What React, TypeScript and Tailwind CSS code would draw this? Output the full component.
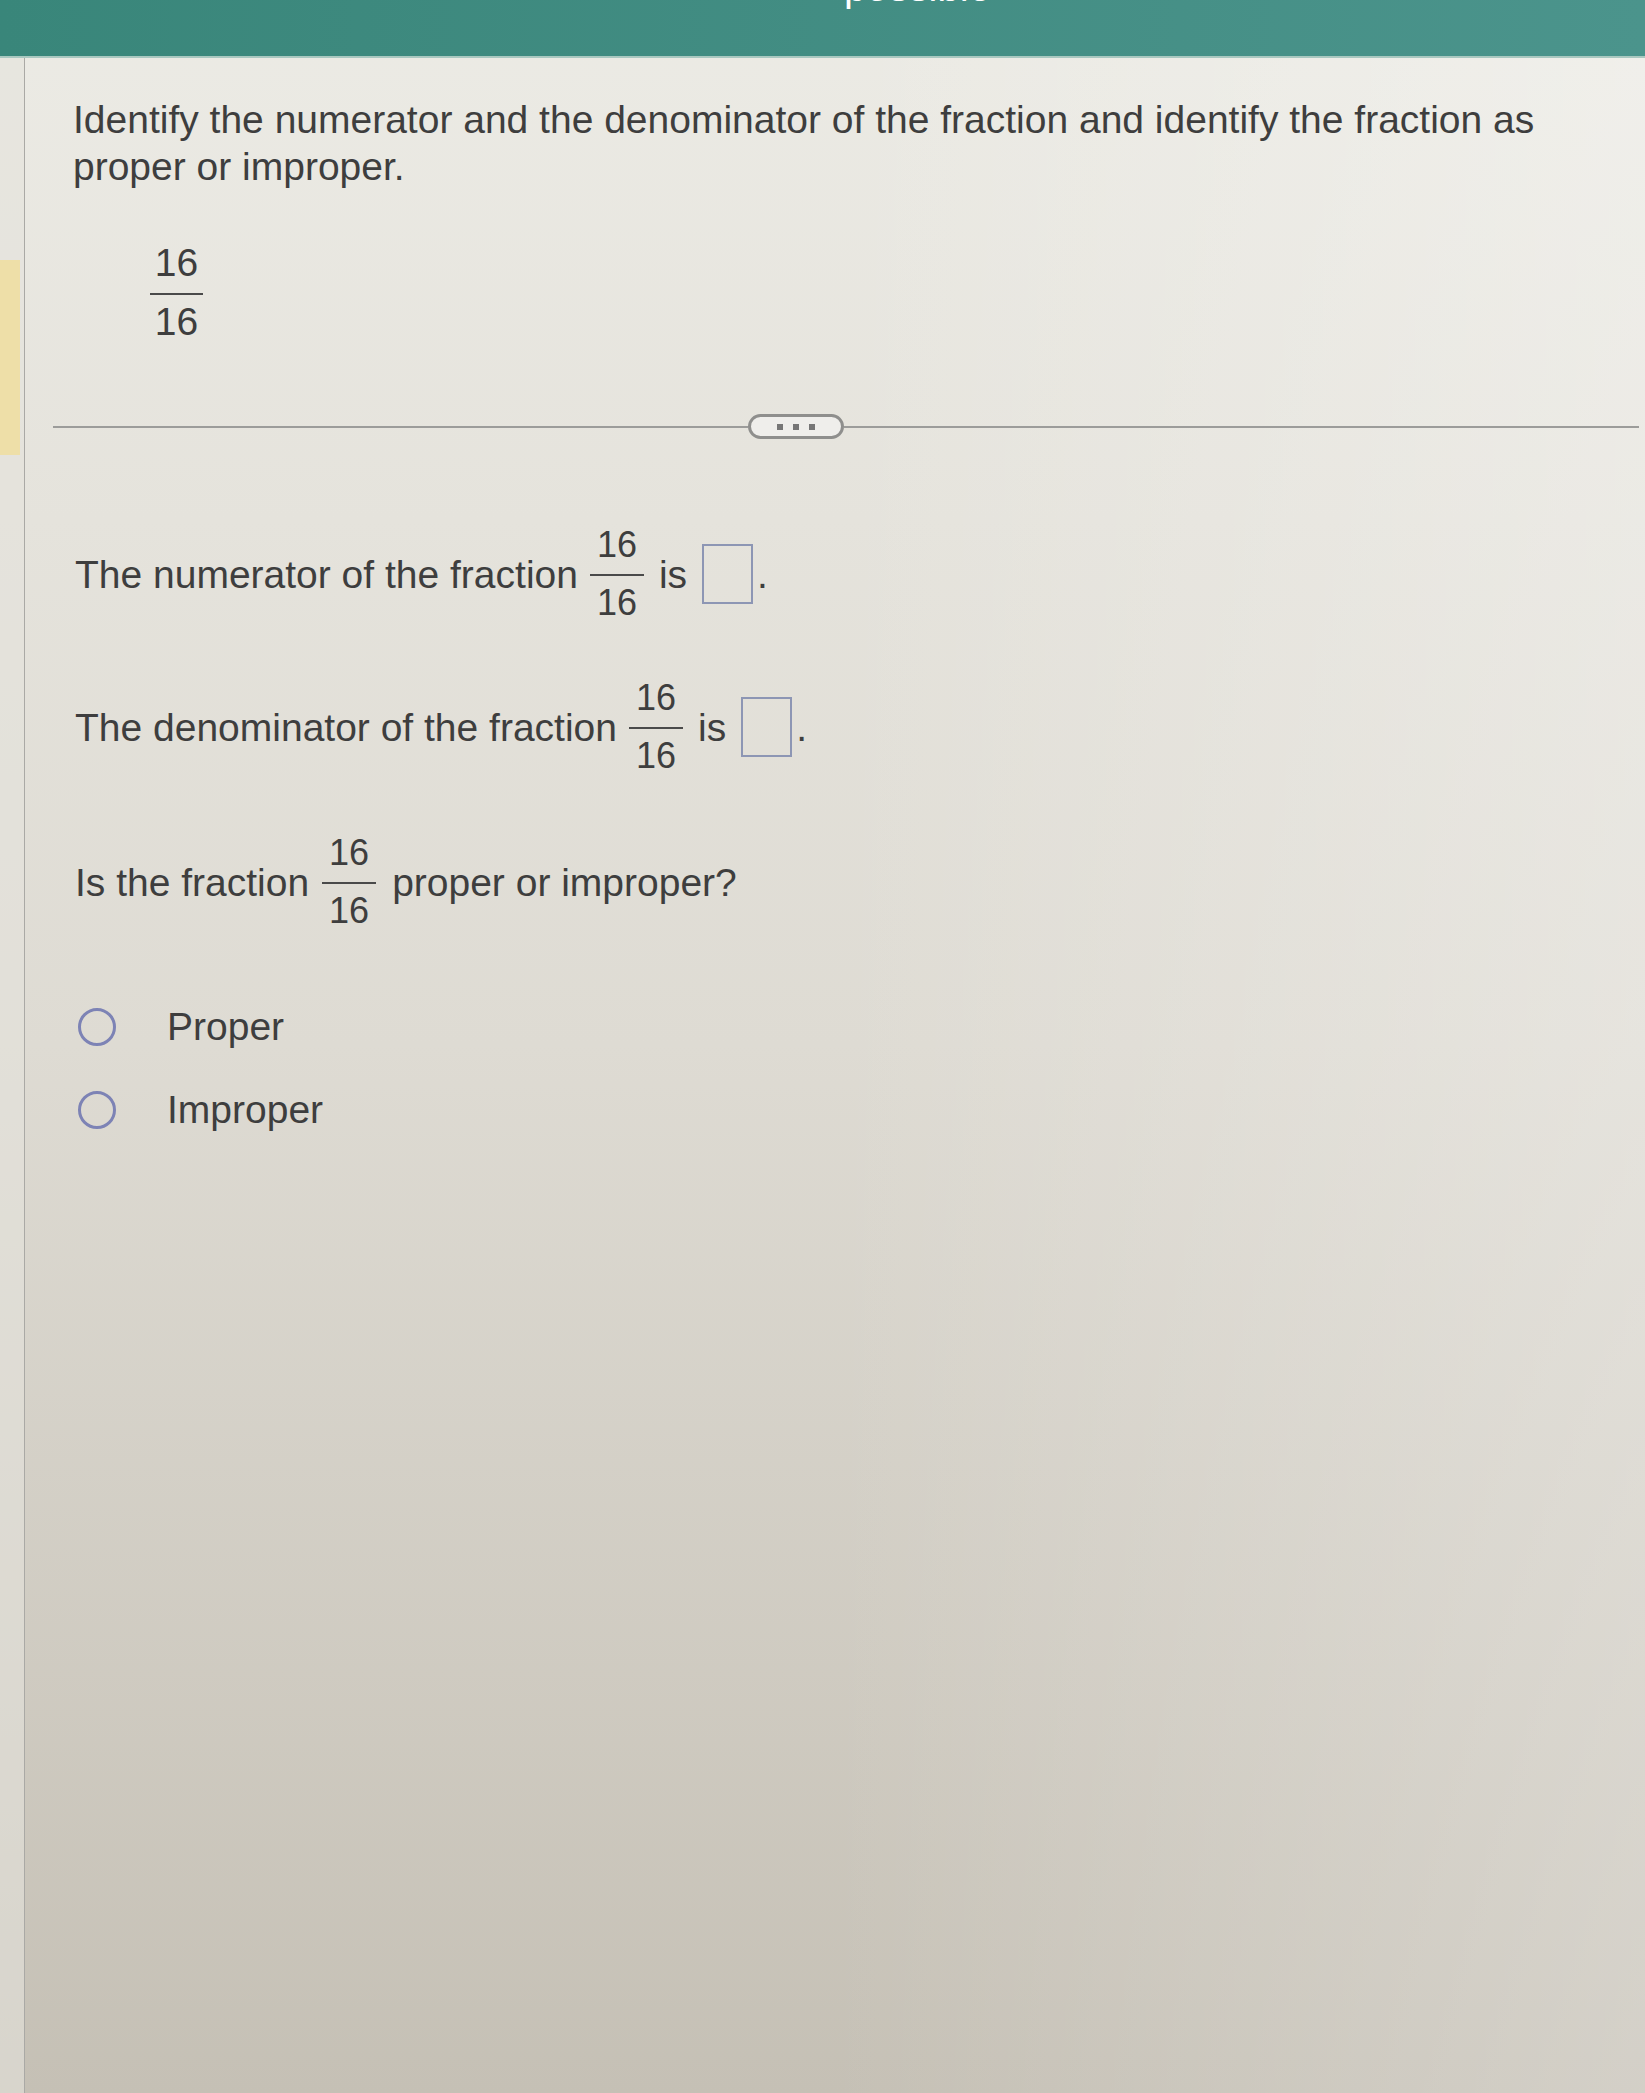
import React from 'react';

function Fraction({ big = false }: { big?: boolean }) {
  const num = big ? 'text-[39px]' : 'text-[36px]';
  return (
    <div className={`flex flex-col items-center ${big ? 'w-[53px]' : 'w-[54px]'}`}>
      <span className={`${num} leading-none`}>16</span>
      <span className={`${big ? 'mt-[11px]' : 'mt-[11px]'} h-[2px] w-full bg-[#4a4a4a]`} />
      <span className={`${big ? 'mt-[7px]' : 'mt-[9px]'} ${num} leading-none`}>16</span>
    </div>
  );
}

function AnswerRow({ label, className }: { label: string; className?: string }) {
  return (
    <div className={`ml-[22px] flex items-center text-[39px] leading-[47px] ${className ?? ''}`}>
      <span>{label}</span>
      <div className="ml-[12px]">
        <Fraction />
      </div>
      <span className="ml-[15px]">is</span>
      <span className="ml-[15px] h-[60px] w-[51px] border-2 border-[#8d96b4]" />
      <span className="ml-[4px]">.</span>
    </div>
  );
}

function Radio({ label, className }: { label: string; className?: string }) {
  return (
    <label className={`ml-[25px] flex h-[47px] items-center ${className ?? ''}`}>
      <span className="h-[38px] w-[38px] rounded-full border-[3px] border-[#7d83b5]" />
      <span className="ml-[51px] text-[39px] leading-[47px]">{label}</span>
    </label>
  );
}

export default function App() {
  return (
    <div className="min-h-[2093px] w-full bg-gradient-to-b from-[#ecebe5] via-[#dedbd3] to-[#c5c0b5] font-['Liberation_Sans',Arial,sans-serif] text-[#3e3e3e]">
      <div className="flex min-h-[2093px] w-full flex-col bg-gradient-to-r from-transparent via-transparent to-white/25">
        {/* Top bar */}
        <header className="flex h-[58px] justify-center overflow-hidden border-b-2 border-[#a9c8c0] bg-gradient-to-r from-[#39867a] to-[#4b948c]">
          <span className="ml-[190px] -mt-[33px] text-[40px] leading-none text-white">possible</span>
        </header>

        <div className="flex flex-1">
          {/* Left gutter */}
          <aside className="w-[25px] border-r border-[#aaa9a5] bg-[#e4e2dc]/60">
            <div className="mt-[202px] h-[195px] w-[20px] bg-[#eedfa8]" />
          </aside>

          <main className="flex-1 pl-[28px] pr-[6px] pt-[38px]">
            <p className="ml-[20px] w-[1530px] text-[39px] leading-[47px]">
              Identify the numerator and the denominator of the fraction and identify the fraction as proper or improper.
            </p>

            <div className="ml-[97px] mt-[53px] w-fit">
              <Fraction big />
            </div>

            {/* Divider */}
            <div className="mt-[73px] flex items-center">
              <span className="h-[2px] w-[695px] bg-[#9c9c9a]" />
              <button className="flex h-[25px] w-[96px] items-center justify-center gap-[10px] rounded-full border-[3px] border-[#8f8f8d] bg-[#efeeeb]">
                <span className="h-[6px] w-[6px] bg-[#767676]" />
                <span className="h-[6px] w-[6px] bg-[#767676]" />
                <span className="h-[6px] w-[6px] bg-[#767676]" />
              </button>
              <span className="h-[2px] flex-1 bg-[#9c9c9a]" />
            </div>

            <AnswerRow label="The numerator of the fraction" className="mt-[88px]" />
            <AnswerRow label="The denominator of the fraction" className="mt-[59px]" />

            <div className="ml-[22px] mt-[61px] flex items-center text-[39px] leading-[47px]">
              <span>Is the fraction</span>
              <div className="ml-[13px]">
                <Fraction />
              </div>
              <span className="ml-[16px]">proper or improper?</span>
            </div>

            <Radio label="Proper" className="mt-[74px]" />
            <Radio label="Improper" className="mt-[36px]" />
          </main>
        </div>
      </div>
    </div>
  );
}
